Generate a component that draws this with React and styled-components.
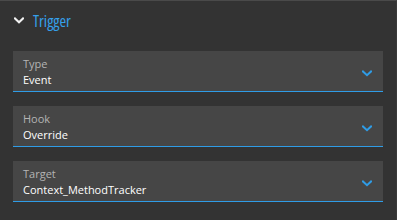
import styled, { createGlobalStyle } from 'styled-components';

const GlobalStyle = createGlobalStyle`
    html, body {
        margin: 0;
        padding: 0;
        background: #333333;
    }
    body {
        font-family: "Open Sans", "Noto Sans", sans-serif;
    }
`;

const fields = [
    { label: 'Type', value: 'Event' },
    { label: 'Hook', value: 'Override' },
    { label: 'Target', value: 'Context_MethodTracker' },
];

function Chevron({ color, stroke = 2 }) {
    return (
        <svg width={10} height={7} viewBox="0 0 10 7" fill="none">
            <polyline points="1,1.5 5,5.2 9,1.5" stroke={color} strokeWidth={stroke} strokeLinecap="square" />
        </svg>
    );
}

function App() {
    return (
        <>
            <GlobalStyle />
            <Panel>
                <Header>
                    <HeaderIcon>
                        <Chevron color="#f2f2f2" stroke={2.2} />
                    </HeaderIcon>
                    <HeaderTitle>Trigger</HeaderTitle>
                </Header>
                <Fields>
                    {fields.map((f) => (
                        <Field key={f.label}>
                            <FieldText>
                                <Label>{f.label}</Label>
                                <Value>{f.value}</Value>
                            </FieldText>
                            <FieldIcon>
                                <Chevron color="#2f9ce6" stroke={2} />
                            </FieldIcon>
                        </Field>
                    ))}
                </Fields>
            </Panel>
        </>
    );
}

const Panel = styled.div`
    width: 397px;
    height: 220px;
    box-sizing: border-box;
    border-top: 1px solid #4a4a4a;
    border-right: 1px solid #3a3a3a;
    background: #333333;
`;

const Header = styled.div`
    display: flex;
    align-items: center;
    height: 37px;
    padding-left: 14px;
    gap: 9px;
`;

const HeaderIcon = styled.div`
    display: flex;
    align-items: center;
    width: 10px;
    height: 7px;
    margin-top: 2px;
`;

const HeaderTitle = styled.div`
    color: #35a0ea;
    font-size: 16px;
    font-stretch: 80%;
    line-height: 20px;
    margin-top: 3px;
`;

const Fields = styled.div`
    display: flex;
    flex-direction: column;
    gap: 14px;
    margin-top: 13px;
    padding-left: 13px;
`;

const Field = styled.div`
    display: flex;
    align-items: center;
    justify-content: space-between;
    width: 370px;
    height: 40px;
    box-sizing: content-box;
    background: #464646;
    border-bottom: 1px solid #2f9ce6;
`;

const FieldText = styled.div`
    display: flex;
    flex-direction: column;
    padding: 5px 0 3px 10px;
`;

const Label = styled.div`
    color: #b4b4b4;
    font-size: 11px;
    line-height: 16px;
`;

const Value = styled.div`
    color: #ffffff;
    font-size: 11px;
    line-height: 16px;
`;

const FieldIcon = styled.div`
    display: flex;
    margin-right: 11px;
    margin-top: 5px;
`;

export default App;
